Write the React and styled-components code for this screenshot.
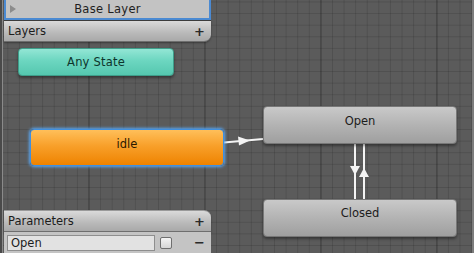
import React from 'react';
import styled, { createGlobalStyle } from 'styled-components';

const GlobalStyle = createGlobalStyle`
  html, body {
    margin: 0;
    padding: 0;
    background: #595959;
  }
  body {
    font-family: 'DejaVu Sans', Verdana, sans-serif;
  }
`;

const Window = styled.div`
  position: relative;
  display: flex;
  width: 474px;
  height: 253px;
  overflow: hidden;
  background-color: #5b5b5b;
  background-image:
    linear-gradient(to right, rgba(0, 0, 0, 0.26) 1px, transparent 1px),
    linear-gradient(to right, rgba(0, 0, 0, 0.12) 1px, transparent 1px),
    linear-gradient(to bottom, rgba(0, 0, 0, 0.12) 1px, transparent 1px);
  background-size: 116px 100%, 11.6px 11.6px, 11.6px 11.6px;
  background-position: 88.5px 0, 88.5px 1.5px, 0 1.5px;
  border-right: 2px solid #7d7d7d;
  box-sizing: border-box;
`;

const EdgeStrip = styled.div`
  width: 2px;
  flex: none;
  background: #4a4a4a;
  border-right: 1px solid #8a8a8a;
`;

const Sidebar = styled.div`
  position: relative;
  z-index: 2;
  width: 207px;
  margin-left: 1px;
  display: flex;
  flex-direction: column;
  justify-content: space-between;
`;

const LayerRow = styled.div`
  height: 18px;
  display: flex;
  align-items: center;
  background: #c3c3c3;
  border: 2px solid #4b8ad2;
  border-top: none;
  font-size: 11.5px;
  color: #1e1e1e;
  position: relative;
`;

const PlayMark = styled.span`
  position: absolute;
  left: 4px;
  top: 5px;
  width: 0;
  height: 0;
  border-top: 4px solid transparent;
  border-bottom: 4px solid transparent;
  border-left: 6px solid #8c8c8c;
`;

const LayerName = styled.span`
  flex: 1;
  text-align: center;
  letter-spacing: 0.3px;
`;

const Header = styled.div`
  height: 20px;
  display: flex;
  align-items: center;
  justify-content: space-between;
  padding: 0 6px 0 4px;
  background: linear-gradient(#dadada, #b9b9b9 60%, #a9a9a9);
  color: #1c1c1c;
  font-size: 11.5px;
  border-top: 1px solid ${(p) => (p.$top ? '#3c3c3c' : '#9a9a9a')};
  border-bottom: 1px solid #6e6e6e;
  border-radius: ${(p) => (p.$top ? '0 0 7px 0' : '0 7px 0 0')};
  box-shadow: 0 1px 2px rgba(0, 0, 0, 0.35);
`;

const PlusMinus = styled.span`
  font-weight: bold;
  font-size: 13px;
  color: #2a2a2a;
  line-height: 1;
`;

const ParamRow = styled.div`
  height: 21px;
  display: flex;
  align-items: center;
  padding: 0 6px 0 3px;
  background: #c4c4c4;
  gap: 5px;
`;

const ParamInput = styled.div`
  width: 143px;
  height: 14px;
  display: flex;
  align-items: center;
  padding-left: 3px;
  background: #e2e2e2;
  border: 1px solid #8e8e8e;
  font-size: 11.5px;
  color: #1c1c1c;
`;

const Checkbox = styled.div`
  width: 10px;
  height: 10px;
  border: 1px solid #6f6f6f;
  border-radius: 2px;
  background: linear-gradient(#f4f4f4, #d6d6d6);
`;

const Spacer = styled.div`
  flex: 1;
`;

const Node = styled.div`
  position: absolute;
  z-index: 1;
  left: ${(p) => p.$x}px;
  top: ${(p) => p.$y}px;
  width: ${(p) => p.$w}px;
  height: ${(p) => p.$h}px;
  box-sizing: border-box;
  display: flex;
  justify-content: center;
  padding-top: ${(p) => p.$pad}px;
  border-radius: 4px;
  font-size: 11.5px;
  box-shadow: 0 2px 3px rgba(0, 0, 0, 0.4);
`;

const AnyStateNode = styled(Node)`
  z-index: 3;
  align-items: center;
  padding-top: 0;
  background: linear-gradient(#93e6d5, #6cd6c0 45%, #55c7af);
  border: 1px solid #3e9e8a;
  color: #0d342b;
  letter-spacing: 0.2px;
`;

const IdleNode = styled(Node)`
  background: linear-gradient(#ffbf5a, #f8a02a 45%, #ee8300);
  border: 1px solid #3f8fe0;
  box-shadow: 0 0 3px 1px #5aa6f0;
  color: #2a1800;
`;

const StateNode = styled(Node)`
  background: linear-gradient(#c9c9c9, #b3b3b3 50%, #9f9f9f);
  border: 1px solid #777;
  color: #1c1c1c;
`;

const Wires = styled.svg`
  position: absolute;
  left: 0;
  top: 0;
  z-index: 1;
  pointer-events: none;
`;

export default function App() {
  return (
    <>
      <GlobalStyle />
      <Window>
        <EdgeStrip />
        <Sidebar>
          <div>
            <LayerRow>
              <PlayMark />
              <LayerName>Base Layer</LayerName>
            </LayerRow>
            <Header $top>
              <span>Layers</span>
              <PlusMinus>+</PlusMinus>
            </Header>
          </div>
          <div>
            <Header>
              <span>Parameters</span>
              <PlusMinus>+</PlusMinus>
            </Header>
            <ParamRow>
              <ParamInput>Open</ParamInput>
              <Checkbox />
              <Spacer />
              <PlusMinus>−</PlusMinus>
            </ParamRow>
          </div>
        </Sidebar>

        <Wires width="474" height="253" viewBox="0 0 474 253">
          <g stroke="#f4f4f4" strokeWidth="2" fill="none">
            <line x1="224" y1="142.5" x2="263" y2="139" />
            <line x1="355" y1="143" x2="355" y2="199" />
            <line x1="364" y1="143" x2="364" y2="199" />
          </g>
          <g fill="#f4f4f4">
            <polygon points="238,136.5 250,140.5 239,145.5" />
            <polygon points="350,166 360,166 355,175" />
            <polygon points="359,177 369,177 364,168" />
          </g>
        </Wires>

        <AnyStateNode $x={18} $y={48} $w={156} $h={28}>Any State</AnyStateNode>
        <IdleNode $x={30} $y={129} $w={194} $h={37} $pad={7}>idle</IdleNode>
        <StateNode $x={263} $y={106} $w={194} $h={38} $pad={7}>Open</StateNode>
        <StateNode $x={263} $y={199} $w={194} $h={38} $pad={6}>Closed</StateNode>
      </Window>
    </>
  );
}
